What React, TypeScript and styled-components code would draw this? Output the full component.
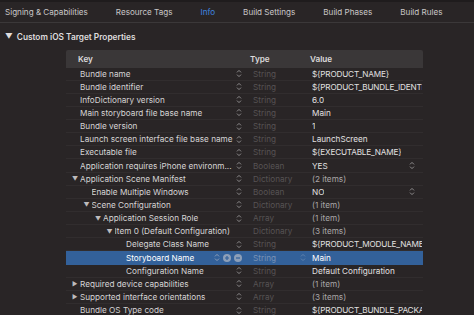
import React from "react";
import styled, { createGlobalStyle } from "styled-components";

const GlobalStyle = createGlobalStyle`
  html, body { margin: 0; padding: 0; background: #292526; }
  body { font-family: Inter, Roboto, "Liberation Sans", Arial, sans-serif; -webkit-font-smoothing: antialiased; }
`;

const Page = styled.div`
  width: 474px;
  height: 315px;
  overflow: hidden;
  background: #292526;
`;

const TabBar = styled.div`
  height: 20px;
  display: flex;
  align-items: center;
  gap: 28px;
  padding-left: 5px;
  border-top: 2px solid #1f1c1d;
  border-bottom: 1px solid #3b3839;
`;

const Tab = styled.div<{ $active?: boolean }>`
  font-size: 8.1px;
  color: ${(p) => (p.$active ? "#3f86e0" : "#c9c7c8")};
  white-space: nowrap;
`;

const SectionHeader = styled.div`
  height: 27px;
  display: flex;
  align-items: center;
  padding-left: 5px;
  gap: 4px;
  font-size: 8.3px;
  font-weight: 600;
  color: #dedcdd;
`;

const Triangle = styled.span`
  font-size: 7.5px;
`;

const Table = styled.div`
  margin-left: 66px;
  width: 357px;
`;

const HeaderRow = styled.div`
  display: grid;
  grid-template-columns: 180px 62px 115px;
  height: 17.5px;
  align-items: center;
  background: #3a3738;
  border-radius: 2px 2px 0 0;
  font-size: 8.2px;
  font-weight: 600;
  color: #dcdadb;
`;

const HeadCell = styled.div<{ $pad: number }>`
  padding-left: ${(p) => p.$pad}px;
`;

const Row = styled.div<{ $selected?: boolean }>`
  display: grid;
  grid-template-columns: 180px 62px 115px;
  height: 13.15px;
  box-sizing: border-box;
  align-items: center;
  font-size: 8.2px;
  background: ${(p) => (p.$selected ? "#33619a" : "transparent")};
  border-bottom: 1px solid ${(p) => (p.$selected ? "#33619a" : "#312d2e")};
`;

const KeyCell = styled.div<{ $level: number; $selected?: boolean }>`
  display: flex;
  align-items: center;
  padding-left: ${(p) => 6 + p.$level * 11.5}px;
  padding-right: 4px;
  color: ${(p) => (p.$selected ? "#ffffff" : "#d6d4d5")};
  white-space: nowrap;
  overflow: hidden;
`;

const Disclosure = styled.span`
  width: 8px;
  flex: none;
  font-size: 6px;
  color: #bdbbbc;
`;

const KeyText = styled.span`
  flex: 1;
  overflow: hidden;
`;

const Controls = styled.span`
  display: flex;
  align-items: center;
  gap: 3px;
  flex: none;
`;

const TypeCell = styled.div<{ $selected?: boolean }>`
  display: flex;
  align-items: center;
  justify-content: space-between;
  padding-left: 7px;
  padding-right: 2px;
  color: ${(p) => (p.$selected ? "#7a93b6" : "#575354")};
`;

const ValueCell = styled.div<{ $dim?: boolean; $selected?: boolean }>`
  display: flex;
  align-items: center;
  justify-content: space-between;
  padding-left: 4px;
  padding-right: 1px;
  color: ${(p) => (p.$selected ? "#ffffff" : p.$dim ? "#a9a7a8" : "#e2e0e1")};
  white-space: nowrap;
  overflow: hidden;
`;

const ValueText = styled.span<{ $code?: boolean }>`
  overflow: hidden;
  letter-spacing: ${(p) => (p.$code ? "-0.2px" : "0")};
`;

const BoolStep = styled.span`
  display: flex;
  margin-right: 7px;
`;

const Stepper = ({ color }: { color: string }) => (
  <svg width="6" height="9" viewBox="0 0 6 9" style={{ flex: "none" }}>
    <path d="M1 3.4 L3 1.4 L5 3.4 M1 5.6 L3 7.6 L5 5.6" stroke={color} strokeWidth="1" fill="none" />
  </svg>
);

const CircleBtn = ({ minus }: { minus?: boolean }) => (
  <svg width="8" height="8" viewBox="0 0 8 8" style={{ flex: "none" }}>
    <circle cx="4" cy="4" r="4" fill="#8d9fb8" />
    <path d={minus ? "M2 4 H6" : "M2 4 H6 M4 2 V6"} stroke="#33619a" strokeWidth="1.2" />
  </svg>
);

type Item = {
  key: string;
  level: number;
  type: string;
  value: string;
  tri?: "open" | "closed";
  stepper?: boolean;
  boolStep?: boolean;
  dim?: boolean;
  selected?: boolean;
};

const rows: Item[] = [
  { key: "Bundle name", level: 0, type: "String", value: "${PRODUCT_NAME}", stepper: true },
  { key: "Bundle identifier", level: 0, type: "String", value: "${PRODUCT_BUNDLE_IDENTIFIER}", stepper: true },
  { key: "InfoDictionary version", level: 0, type: "String", value: "6.0", stepper: true },
  { key: "Main storyboard file base name", level: 0, type: "String", value: "Main", stepper: true },
  { key: "Bundle version", level: 0, type: "String", value: "1", stepper: true },
  { key: "Launch screen interface file base name", level: 0, type: "String", value: "LaunchScreen", stepper: true },
  { key: "Executable file", level: 0, type: "String", value: "${EXECUTABLE_NAME}", stepper: true },
  { key: "Application requires iPhone environm...", level: 0, type: "Boolean", value: "YES", stepper: true, boolStep: true },
  { key: "Application Scene Manifest", level: 0, tri: "open", type: "Dictionary", value: "(2 items)", stepper: true, dim: true },
  { key: "Enable Multiple Windows", level: 1, type: "Boolean", value: "NO", stepper: true, boolStep: true },
  { key: "Scene Configuration", level: 1, tri: "open", type: "Dictionary", value: "(1 item)", stepper: true, dim: true },
  { key: "Application Session Role", level: 2, tri: "open", type: "Array", value: "(1 item)", stepper: true, dim: true },
  { key: "Item 0 (Default Configuration)", level: 3, tri: "open", type: "Dictionary", value: "(3 items)", dim: true },
  { key: "Delegate Class Name", level: 4, type: "String", value: "${PRODUCT_MODULE_NAME}", stepper: true },
  { key: "Storyboard Name", level: 4, type: "String", value: "Main", selected: true },
  { key: "Configuration Name", level: 4, type: "String", value: "Default Configuration", stepper: true },
  { key: "Required device capabilities", level: 0, tri: "closed", type: "Array", value: "(1 item)", stepper: true, dim: true },
  { key: "Supported interface orientations", level: 0, tri: "closed", type: "Array", value: "(3 items)", stepper: true, dim: true },
  { key: "Bundle OS Type code", level: 0, type: "String", value: "${PRODUCT_BUNDLE_PACKAGE_TYPE}", stepper: true },
];

const tabs = ["Signing & Capabilities", "Resource Tags", "Info", "Build Settings", "Build Phases", "Build Rules"];

export default function App() {
  return (
    <Page>
      <GlobalStyle />
      <TabBar>
        {tabs.map((t) => (
          <Tab key={t} $active={t === "Info"}>
            {t}
          </Tab>
        ))}
      </TabBar>
      <SectionHeader>
        <Triangle>▼</Triangle>
        <span>Custom iOS Target Properties</span>
      </SectionHeader>
      <Table>
        <HeaderRow>
          <HeadCell $pad={12}>Key</HeadCell>
          <HeadCell $pad={4}>Type</HeadCell>
          <HeadCell $pad={2}>Value</HeadCell>
        </HeaderRow>
        {rows.map((r, i) => (
          <Row key={i} $selected={r.selected}>
            <KeyCell $level={r.level} $selected={r.selected}>
              <Disclosure>{r.tri === "open" ? "▼" : r.tri === "closed" ? "▶" : ""}</Disclosure>
              <KeyText>{r.key}</KeyText>
              {r.selected ? (
                <Controls>
                  <Stepper color="#8d9fb8" />
                  <CircleBtn />
                  <CircleBtn minus />
                </Controls>
              ) : r.stepper ? (
                <Controls>
                  <Stepper color="#8f8d8e" />
                </Controls>
              ) : null}
            </KeyCell>
            <TypeCell $selected={r.selected}>
              <span>{r.type}</span>
              {r.selected ? <Stepper color="#5f82ad" /> : null}
            </TypeCell>
            <ValueCell $dim={r.dim} $selected={r.selected}>
              <ValueText $code={r.value.startsWith("$")}>{r.value}</ValueText>
              {r.boolStep ? (
                <BoolStep>
                  <Stepper color="#8f8d8e" />
                </BoolStep>
              ) : null}
            </ValueCell>
          </Row>
        ))}
      </Table>
    </Page>
  );
}
